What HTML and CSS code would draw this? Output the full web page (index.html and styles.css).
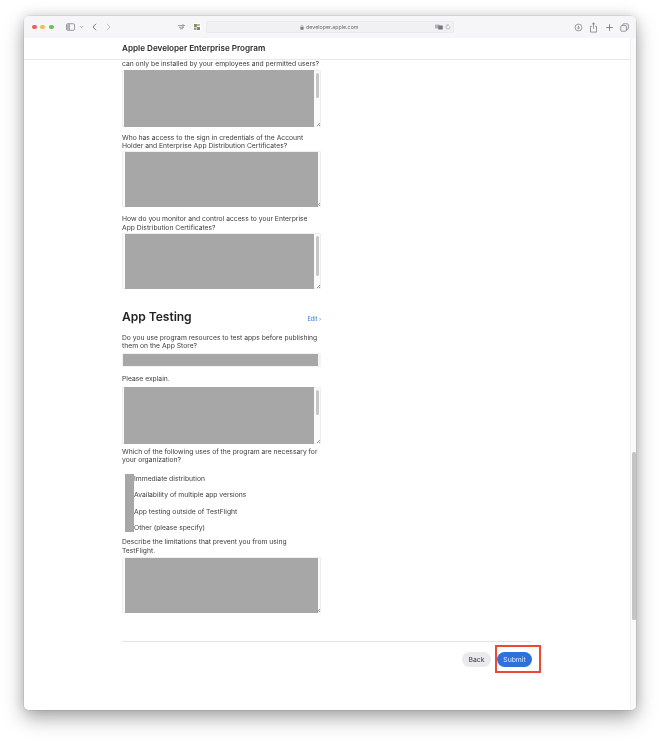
FILE: index.html
```html
<!DOCTYPE html>
<html lang="en">
<head>
<meta charset="utf-8">
<title>Apple Developer Enterprise Program</title>
<link rel="stylesheet" href="styles.css">
</head>
<body>
<div class="window">
  <header class="toolbar">
    <div class="lights"><span class="light red"></span><span class="light yellow"></span><span class="light green"></span></div>
    <svg class="ico sidebar" viewBox="0 0 9 8" width="9" height="8"><rect x=".5" y=".7" width="8" height="6.6" rx="1.2" fill="none" stroke="#77777c" stroke-width=".7"/><path d="M3.4.7v6.6" stroke="#77777c" stroke-width=".7"/><rect x="1" y="1.2" width="2.2" height="5.6" fill="#b5b5b9"/></svg>
    <svg class="ico caret" viewBox="0 0 5 4" width="5" height="4"><path d="M1 1.2l1.5 1.5L4 1.2" fill="none" stroke="#909094" stroke-width=".7"/></svg>
    <svg class="ico back" viewBox="0 0 5 8" width="5" height="8"><path d="M4 .8L1 4l3 3.2" fill="none" stroke="#6c6c70" stroke-width=".9"/></svg>
    <svg class="ico forward" viewBox="0 0 5 8" width="5" height="8"><path d="M1 .8L4 4 1 7.200" fill="none" stroke="#b9b9bd" stroke-width=".9"/></svg>
    <svg class="ico shield" viewBox="0 0 9 8" width="9" height="8"><path d="M1 2.500h7M2 4.200h5M3 5.800h3M6 1v4" stroke="#a2a2a6" stroke-width="1.100" fill="none"/></svg>
    <span class="tile"><svg viewBox="0 0 6 6" width="6" height="6"><rect x="0" y="0" width="3" height="3" fill="#8a8f6c"/><rect x="3" y="3" width="3" height="3" fill="#7b8794"/><rect x="3" y="0" width="3" height="2" fill="#c7b68a"/><rect x="0" y="3.500" width="2.500" height="2.500" fill="#a39a8a"/></svg></span>
    <div class="urlbar">
      <span class="address"><svg viewBox="0 0 4 5" width="4" height="5"><rect x=".4" y="2" width="3.200" height="2.700" rx=".4" fill="#7e7e82"/><path d="M1.100 2V1.300a.9.9 0 0 1 1.800 0V2" fill="none" stroke="#7e7e82" stroke-width=".5"/></svg><span>developer.apple.com</span></span>
      <svg class="translate" viewBox="0 0 8 6" width="8" height="6"><rect x="0" y=".5" width="4.500" height="4" rx=".6" fill="#b3b3b7"/><rect x="3.300" y="1.500" width="4.500" height="4" rx=".6" fill="#77777b"/></svg>
      <svg class="reload" viewBox="0 0 6 6" width="6" height="6"><path d="M4.900 2.400A2 2 0 1 1 3.400 1H2.700M3.400 1L2.800.3M3.400 1l-.6.7" fill="none" stroke="#8e8e92" stroke-width=".5"/></svg>
    </div>
    <div class="tools">
      <svg viewBox="0 0 9 9" width="9" height="9"><circle cx="4.500" cy="4.500" r="3.400" fill="none" stroke="#77777b" stroke-width=".7"/><path d="M4.500 2.700v3M3.200 4.600l1.300 1.200 1.300-1.200" fill="none" stroke="#77777b" stroke-width=".7"/></svg>
      <svg viewBox="0 0 9 11" width="9" height="11"><path d="M2.800 4.300H1.500v5.800h6V4.300H6.200M4.500 6.800V.9M3 2.300L4.500.9 6 2.300" fill="none" stroke="#6f6f73" stroke-width=".7"/></svg>
      <svg viewBox="0 0 9 9" width="9" height="9"><path d="M4.500 1.200v6.600M1.200 4.500h6.600" stroke="#6f6f73" stroke-width=".8"/></svg>
      <svg viewBox="0 0 9 9" width="9" height="9"><rect x="2.700" y=".8" width="5.600" height="5.600" rx="1" fill="none" stroke="#6f6f73" stroke-width=".7"/><rect x=".8" y="2.600" width="5.600" height="5.600" rx="1" fill="#f6f6f8" stroke="#6f6f73" stroke-width=".7"/></svg>
    </div>
  </header>

  <nav class="subnav"><span class="subnav-title">Apple Developer Enterprise Program</span></nav>

  <main class="content">
    <div class="form">
      <p class="label">can only be installed by your employees and permitted users?</p>
      <div class="field f1 gutter">
        <div class="fill"></div>
        <span class="thumb t-short"></span>
        <span class="grip"></span>
      </div>

      <p class="label l2">Who has access to the sign in credentials of the Account Holder and Enterprise App Distribution Certificates?</p>
      <div class="field f2 inset">
        <div class="fill"></div>
        <span class="grip"></span>
      </div>

      <p class="label l3">How do you monitor and control access to your Enterprise App Distribution Certificates?</p>
      <div class="field f2 inset gutter">
        <div class="fill"></div>
        <span class="thumb t-long"></span>
        <span class="grip"></span>
      </div>

      <div class="section-head">
        <h2>App Testing</h2>
        <a class="edit" href="#">Edit ›</a>
      </div>

      <p class="label l4">Do you use program resources to test apps before publishing them on the App Store?</p>
      <div class="select"><div class="fill"></div></div>

      <p class="label l5">Please explain.</p>
      <div class="field f1 gutter tight">
        <div class="fill"></div>
        <span class="thumb t-short"></span>
        <span class="grip"></span>
      </div>

      <p class="label l6">Which of the following uses of the program are necessary for your organization?</p>
      <div class="checks">
        <div class="checkbar"></div>
        <ul class="options">
          <li>Immediate distribution</li>
          <li>Availability of multiple app versions</li>
          <li>App testing outside of TestFlight</li>
          <li>Other (please specify)</li>
        </ul>
      </div>

      <p class="label l7">Describe the limitations that prevent you from using TestFlight.</p>
      <div class="field f2 inset last">
        <div class="fill"></div>
        <span class="grip"></span>
      </div>
    </div>

    <footer class="actions">
      <button class="btn secondary" type="button">Back</button>
      <button class="btn primary" type="button">Submit</button>
      <span class="callout"></span>
    </footer>
  </main>

  <div class="pagebar"><span class="pagethumb"></span></div>
</div>
</body>
</html>
```
FILE: styles.css
```css
* { box-sizing: border-box; }
html, body { margin: 0; height: 100%; }
body {
  background: #fff;
  padding: 16px 24px 0;
  font-family: Inter, "Liberation Sans", sans-serif;
  color: #333336;
  overflow: hidden;
}
.window {
  position: relative;
  width: 612px;
  height: 694px;
  background: #fff;
  border-radius: 5px;
  overflow: hidden;
  box-shadow: 0 0 0 .5px rgba(0,0,0,.12);
  filter: blur(.4px);
}
body::before {
  content: "";
  position: absolute;
  left: 24px;
  top: 16px;
  width: 612px;
  height: 694px;
  border-radius: 5px;
  box-shadow: 0 8px 20px rgba(0,0,0,.34), 0 0 12px rgba(0,0,0,.12);
}
.toolbar {
  height: 22px;
  background: #f6f6f8;
  display: flex;
  align-items: center;
  position: relative;
}
.lights { display: flex; gap: 3.700px; margin-left: 8px; }
.light { width: 4.800px; height: 4.800px; border-radius: 50%; }
.red { background: #ed5f57; }
.yellow { background: #f5bd4f; }
.green { background: #61c454; }
.ico { flex: none; }
.sidebar { margin-left: 12.500px; }
.caret { margin-left: 3.500px; }
.back { margin-left: 8px; }
.forward { margin-left: 9px; }
.shield { margin-left: 66px; }
.tile {
  width: 8px; height: 8px; margin-left: 7px;
  background: #fff; border-radius: 1.500px;
  display: flex; align-items: center; justify-content: center;
}
.urlbar {
  margin-left: 5px;
  width: 248px;
  height: 12px;
  border-radius: 3px;
  background: #f1f1f4;
  box-shadow: inset 0 0 0 .5px #e4e4e8;
  display: flex;
  align-items: center;
  padding-right: 2px;
}
.address {
  flex: 1;
  display: flex; align-items: center; justify-content: center;
  gap: 2px;
  font-size: 5.300px;
  color: #6a6a6e;
  padding-left: 18px;
}
.translate { margin-right: 2px; }
.reload { margin-right: 1px; }
.tools { margin-left: 120px; display: flex; align-items: center; gap: 6.500px; }
.subnav {
  height: 21.500px;
  border-bottom: .7px solid #e7e7e9;
  padding-left: 98px;
  display: flex;
  align-items: center;
}
.subnav-title { font-size: 8.150px; font-weight: 600; color: #2a2a2c; white-space: nowrap; }
.content { padding-left: 98px; }
.form { width: 199px; }
.label { margin: 0; font-size: 6.750px; line-height: 8.700px; color: #3c3c3f; }
.l2 { margin-top: 7px; }
.l3 { margin-top: 8px; }
.l4 { margin-top: 7px; }
.l5 { margin-top: 8px; }
.l6 { margin-top: 4px; }
.l7 { margin-top: 6px; }
.field {
  position: relative;
  background: #fbfbfb;
  box-shadow: inset 0 0 0 .6px #e6e6e8;
  border-radius: 1.500px;
  padding: 0 1.500px 0 2.500px;
  display: flex;
}
.f1 { height: 57px; padding-left: 1.500px; margin-top: 1.500px; }
.tight { margin-top: 3px; padding-left: 2px; }
.f2 { height: 56px; padding: 1px 3px 0; }
.last { margin-top: 2px; }
.fill { flex: 1; background: #a7a7a7; }
.gutter { padding-right: 7px; }
.thumb {
  position: absolute;
  right: 2.500px;
  top: 3px;
  width: 3px;
  border-radius: 1.500px;
  background: #c6c6c6;
}
.t-short { height: 25px; }
.t-long { height: 40px; }
.grip {
  position: absolute;
  right: 1px;
  bottom: 1px;
  width: 3px;
  height: 3px;
  background: linear-gradient(135deg, transparent 50%, #9a9a9a 50%, #9a9a9a 62%, transparent 62%, transparent 78%, #9a9a9a 78%);
}
.section-head {
  margin-top: 18px;
  height: 20px;
  display: flex;
  align-items: center;
  justify-content: space-between;
}
h2 { margin: 0; font-size: 12.100px; font-weight: 600; color: #232325; letter-spacing: -.05px; }
.edit { font-size: 5.500px; color: #2f7ae0; text-decoration: none; padding-top: 4px; }
.select {
  margin-top: 2px;
  height: 14px;
  background: #f4f4f5;
  border-radius: 1.500px;
  padding: 1px 3px 1px .5px;
  display: flex;
}
.checks { margin-top: 9px; display: flex; }
.checkbar { width: 8.500px; height: 58px; margin-left: 3px; background: #a7a7a7; }
.options {
  list-style: none;
  margin: 0;
  padding: 0 0 0 .5px;
  display: flex;
  flex-direction: column;
  gap: 7.330px;
  font-size: 6.750px;
  line-height: 9px;
  color: #3c3c3f;
}
.actions {
  position: relative;
  width: 410px;
  margin-top: 28px;
  padding-top: 9.500px;
  border-top: .7px solid #e4e4e6;
  display: flex;
  justify-content: flex-end;
  gap: 6px;
}
.btn {
  height: 15.500px;
  border: 0;
  border-radius: 8px;
  padding: 0;
  font-family: inherit;
  font-size: 6.800px;
}
.secondary { width: 29px; background: #e9e9ee; color: #3a3a3c; }
.primary { width: 35px; background: #2d72dc; color: #dfeafa; }
.callout {
  position: absolute;
  right: -8.500px;
  top: 2.500px;
  width: 46px;
  height: 28.500px;
  border: 2px solid #ea4a33;
}
.pagebar {
  position: absolute;
  right: 0;
  top: 22px;
  bottom: 0;
  width: 6.500px;
  background: #fafafa;
  border-left: .5px solid #efefef;
}
.pagethumb {
  position: absolute;
  left: 1.500px;
  top: 414px;
  width: 3.500px;
  height: 168px;
  background: #c4c4c4;
  border-radius: 1.500px;
}
```
